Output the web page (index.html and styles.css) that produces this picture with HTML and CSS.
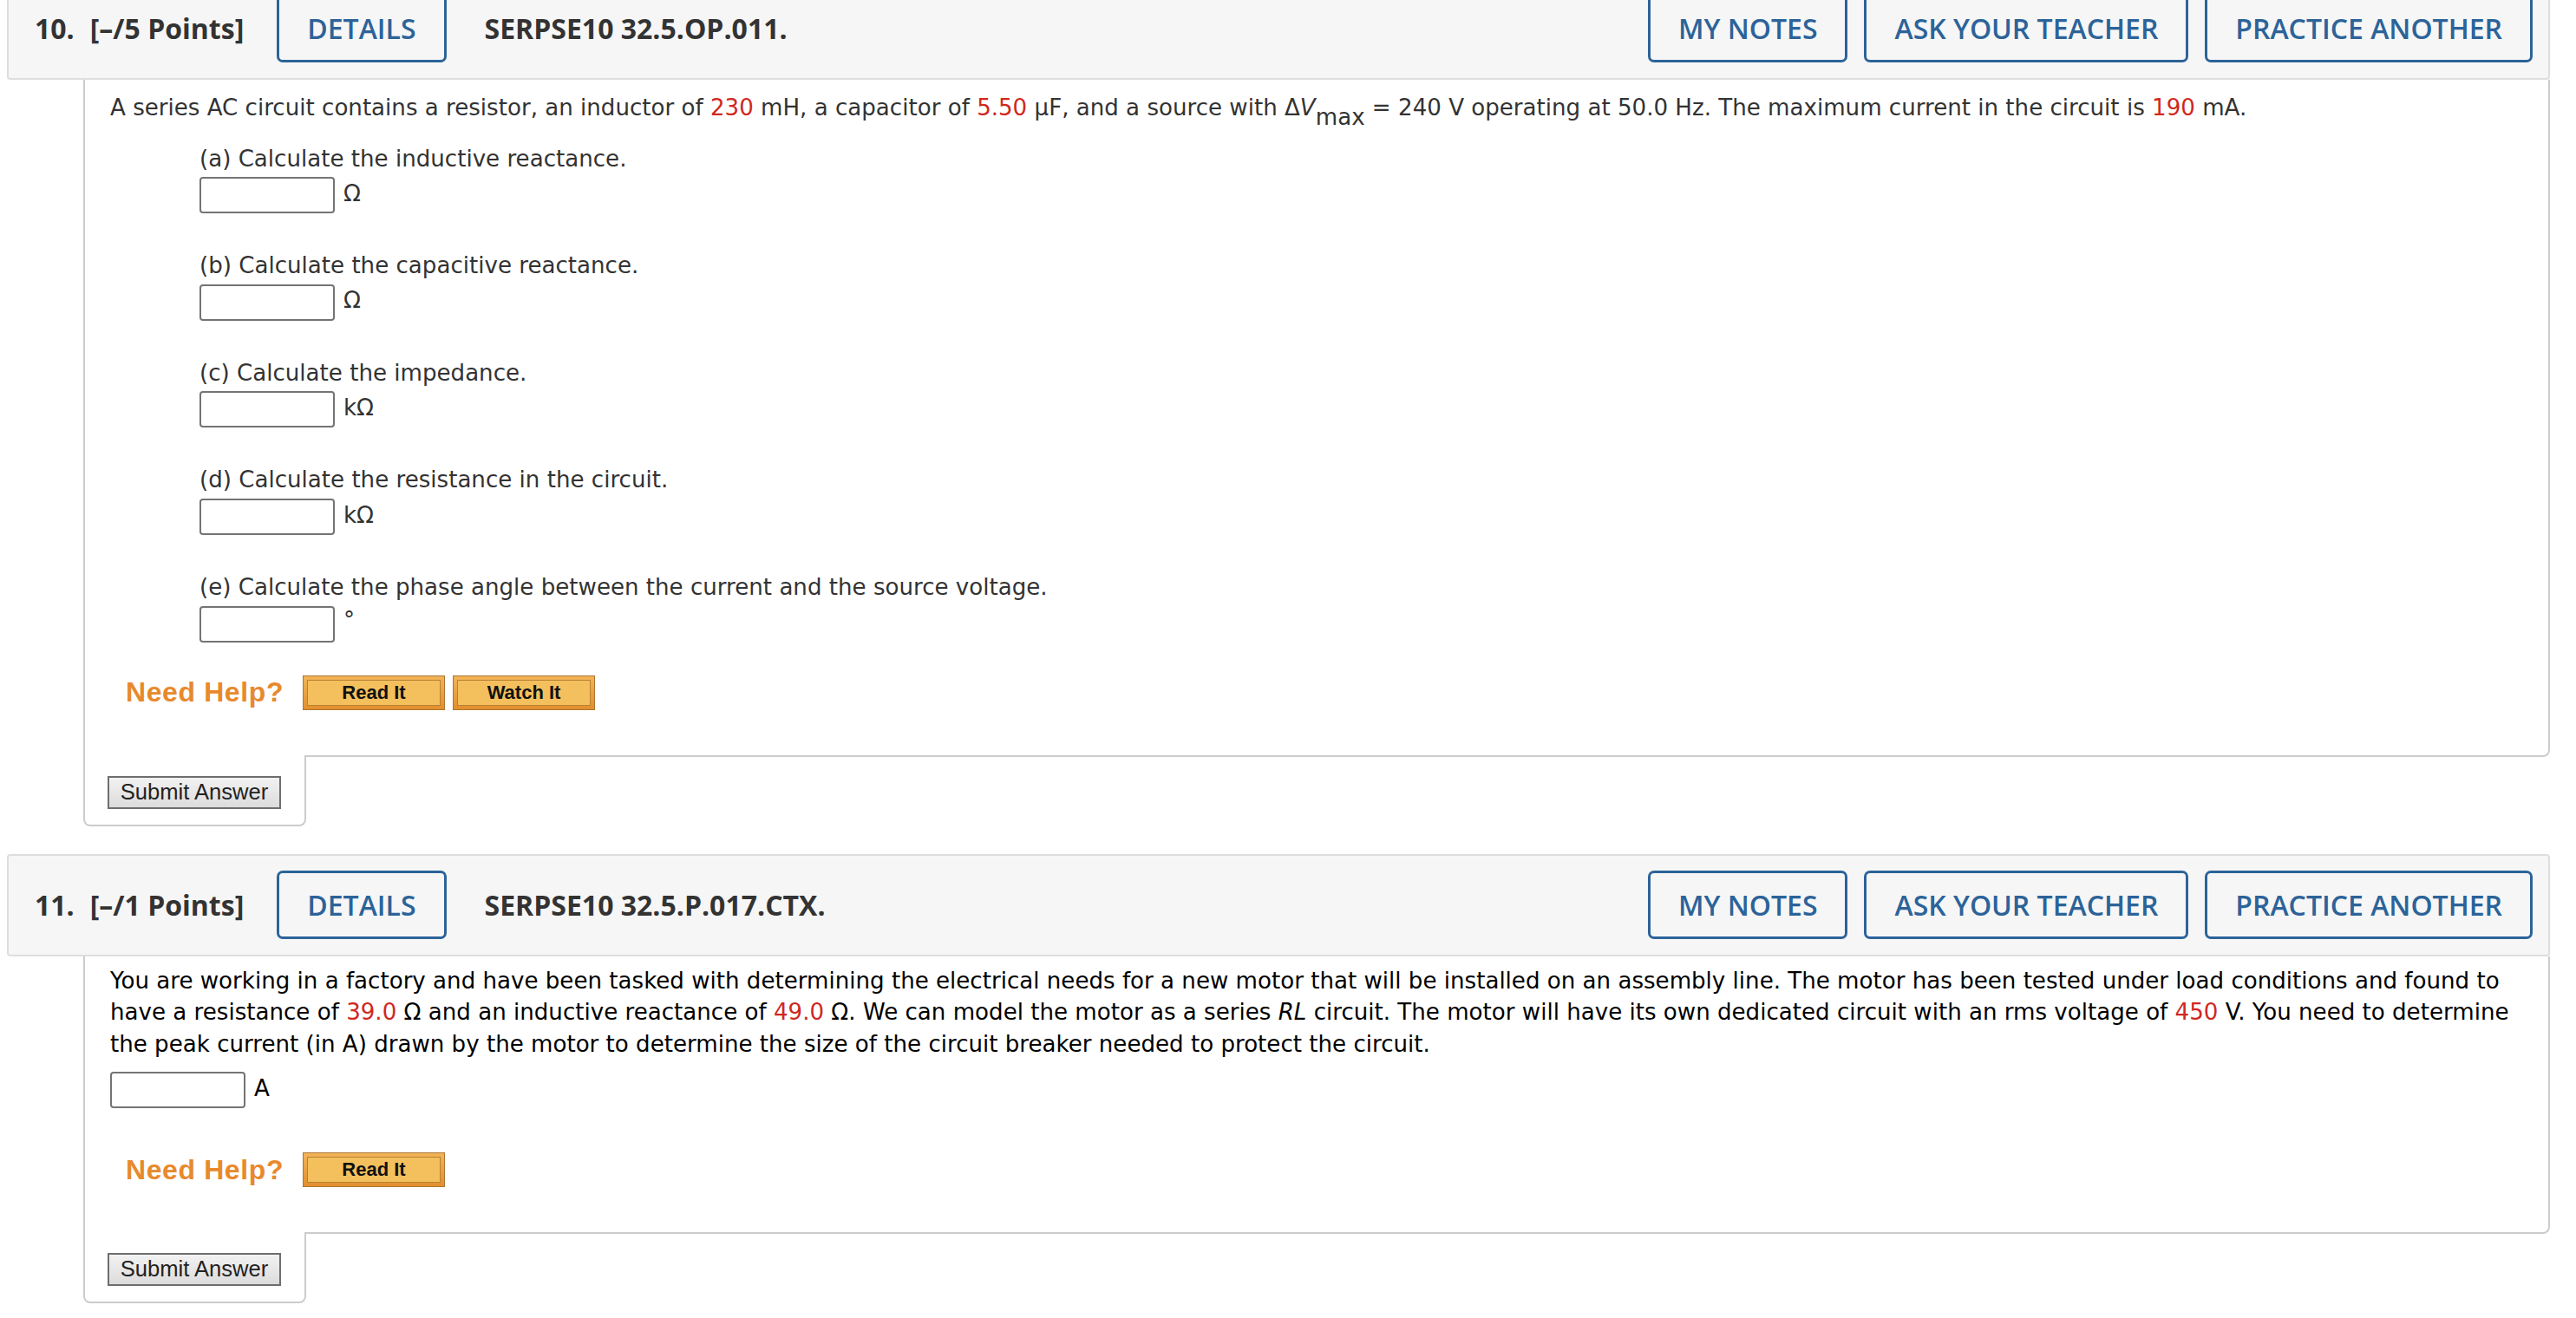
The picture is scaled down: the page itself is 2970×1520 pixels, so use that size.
FILE: index.html
```html
<!DOCTYPE html>
<html lang="en">
<head>
<meta charset="utf-8">
<title>Questions</title>
<link rel="stylesheet" href="styles.css">
</head>
<body>
<div class="page">

  <section class="question">
    <div class="qhead">
      <span class="qnum">10.</span>
      <span class="qpts">[–/5 Points]</span>
      <span class="obtn">DETAILS</span>
      <span class="qcode">SERPSE10 32.5.OP.011.</span>
      <div class="qactions">
        <span class="obtn">MY NOTES</span>
        <span class="obtn">ASK YOUR TEACHER</span>
        <span class="obtn">PRACTICE ANOTHER</span>
      </div>
    </div>
    <div class="qbody">
      <div class="qcontent qcontent--q10">
        <p class="qtext">A series AC circuit contains a resistor, an inductor of <span class="val">230</span> mH, a capacitor of <span class="val">5.50</span> μF, and a source with Δ<i>V</i><span class="sub">max</span> = 240 V operating at 50.0 Hz. The maximum current in the circuit is <span class="val">190</span> mA.</p>

        <div class="part part--first">
          <div class="part-label">(a) Calculate the inductive reactance.</div>
          <div class="answer-row"><span class="answer-box"></span><span class="unit">Ω</span></div>
        </div>
        <div class="part">
          <div class="part-label">(b) Calculate the capacitive reactance.</div>
          <div class="answer-row"><span class="answer-box"></span><span class="unit">Ω</span></div>
        </div>
        <div class="part">
          <div class="part-label">(c) Calculate the impedance.</div>
          <div class="answer-row"><span class="answer-box"></span><span class="unit">kΩ</span></div>
        </div>
        <div class="part">
          <div class="part-label">(d) Calculate the resistance in the circuit.</div>
          <div class="answer-row"><span class="answer-box"></span><span class="unit">kΩ</span></div>
        </div>
        <div class="part">
          <div class="part-label">(e) Calculate the phase angle between the current and the source voltage.</div>
          <div class="answer-row"><span class="answer-box"></span><span class="unit unit--deg">°</span></div>
        </div>

        <div class="help help--q10">
          <span class="help-title">Need Help?</span>
          <span class="help-btn"><span>Read It</span></span>
          <span class="help-btn"><span>Watch It</span></span>
        </div>
      </div>
      <div class="qtab"><span class="submit">Submit Answer</span></div>
    </div>
  </section>

  <section class="question">
    <div class="qhead">
      <span class="qnum">11.</span>
      <span class="qpts">[–/1 Points]</span>
      <span class="obtn">DETAILS</span>
      <span class="qcode">SERPSE10 32.5.P.017.CTX.</span>
      <div class="qactions">
        <span class="obtn">MY NOTES</span>
        <span class="obtn">ASK YOUR TEACHER</span>
        <span class="obtn">PRACTICE ANOTHER</span>
      </div>
    </div>
    <div class="qbody">
      <div class="qcontent qcontent--q11">
        <p class="qtext qtext--black">You are working in a factory and have been tasked with determining the electrical needs for a new motor that will be installed on an assembly line. The motor has been tested under load conditions and found to have a resistance of <span class="val">39.0</span> Ω and an inductive reactance of <span class="val">49.0</span> Ω. We can model the motor as a series <i>RL</i> circuit. The motor will have its own dedicated circuit with an rms voltage of <span class="val">450</span> V. You need to determine the peak current (in A) drawn by the motor to determine the size of the circuit breaker needed to protect the circuit.</p>
        <div class="answer-row answer-row--q11"><span class="answer-box"></span><span class="unit unit--black">A</span></div>

        <div class="help help--q11">
          <span class="help-title">Need Help?</span>
          <span class="help-btn"><span>Read It</span></span>
        </div>
      </div>
      <div class="qtab"><span class="submit">Submit Answer</span></div>
    </div>
  </section>

</div>
</body>
</html>
```

FILE: styles.css
```css
html, body {
  margin: 0;
  padding: 0;
  background: #ffffff;
}

.page {
  margin: -26px 30px 0 8px;
}

.question {
  margin-bottom: 32px;
}

/* ---------- header ---------- */
.qhead {
  display: flex;
  align-items: center;
  gap: 42px;
  background: #f6f6f6;
  border: 2px solid #dedede;
  border-radius: 4px;
  padding: 17px 18px 18px 30px;
  font-family: "Open Sans", "Liberation Sans", sans-serif;
  font-size: 32px;
  color: #333333;
}

.qnum {
  font-weight: 700;
  margin-right: -24px;
}

.qpts {
  font-weight: 700;
  margin-right: -4px;
}

.qcode {
  font-weight: 700;
  margin-left: 2px;
}

.obtn {
  display: inline-block;
  border: 3px solid #2c6399;
  border-radius: 7px;
  padding: 16px 32px;
  line-height: 41px;
  color: #2c6399;
  font-weight: 600;
  white-space: nowrap;
}

.qactions {
  margin-left: auto;
  display: flex;
  gap: 19px;
}

/* ---------- body ---------- */
.qbody {
  margin-left: 88px;
}

.qcontent {
  border: 2px solid #cccccc;
  border-top: 0;
  border-radius: 0 0 8px 0;
  padding: 14px 30px 52px 29px;
  font-family: "DejaVu Sans", Verdana, sans-serif;
  font-size: 26.1px;
  line-height: 36.6px;
  color: #333333;
}

.qcontent--q11 {
  padding-top: 10px;
}

.qtext {
  margin: 0;
}

.qtext--black {
  color: #000000;
}

.val {
  color: #d0281e;
}

.sub {
  vertical-align: -11px;
  line-height: 0;
}

.part {
  margin: 42px 0 0 103px;
}

.part--first {
  margin-top: 22px;
}

.answer-row {
  display: flex;
  align-items: center;
  margin-top: 3px;
}

.answer-row--q11 {
  margin-top: 14px;
}

.answer-box {
  display: block;
  width: 156px;
  height: 42px;
  box-sizing: border-box;
  border: 2px solid #747474;
  border-radius: 4px;
  background: #ffffff;
}

.unit {
  margin-left: 10px;
  margin-top: -4px;
}

.unit--deg {
  align-self: flex-start;
  margin-top: -2px;
}

.unit--black {
  color: #000000;
}

/* ---------- help ---------- */
.help {
  display: flex;
  align-items: center;
  gap: 9px;
  margin-left: 18px;
}

.help--q10 {
  margin-top: 38px;
}

.help--q11 {
  margin-top: 51px;
}

.help-title {
  font-family: "Liberation Sans", Arial, sans-serif;
  font-weight: 700;
  font-size: 32px;
  letter-spacing: 0.6px;
  color: #e8892d;
  margin-right: 13px;
}

.help-btn {
  display: block;
  padding: 4px;
  background: linear-gradient(#f2b458, #e28f2e);
  border: 1px solid #ae7430;
}

.help-btn span {
  display: block;
  width: 154px;
  height: 30px;
  box-sizing: border-box;
  border: 1px solid #b98033;
  background: #f3c05d;
  font-family: "Liberation Sans", Arial, sans-serif;
  font-weight: 700;
  font-size: 22px;
  line-height: 28px;
  text-align: center;
  color: #111111;
}

/* ---------- submit tab ---------- */
.qtab {
  width: fit-content;
  margin-top: -2px;
  padding: 24px 27px 18px 26px;
  background: #ffffff;
  border: 2px solid #cccccc;
  border-top: 0;
  border-radius: 0 0 8px 8px;
}

.submit {
  display: block;
  width: 200px;
  height: 38px;
  box-sizing: border-box;
  border: 2px solid #6e6e6e;
  background: linear-gradient(#f2f2f2, #dcdcdc);
  font-family: "Liberation Sans", Arial, sans-serif;
  font-size: 25.6px;
  line-height: 33px;
  text-align: center;
  color: #222222;
}
```
